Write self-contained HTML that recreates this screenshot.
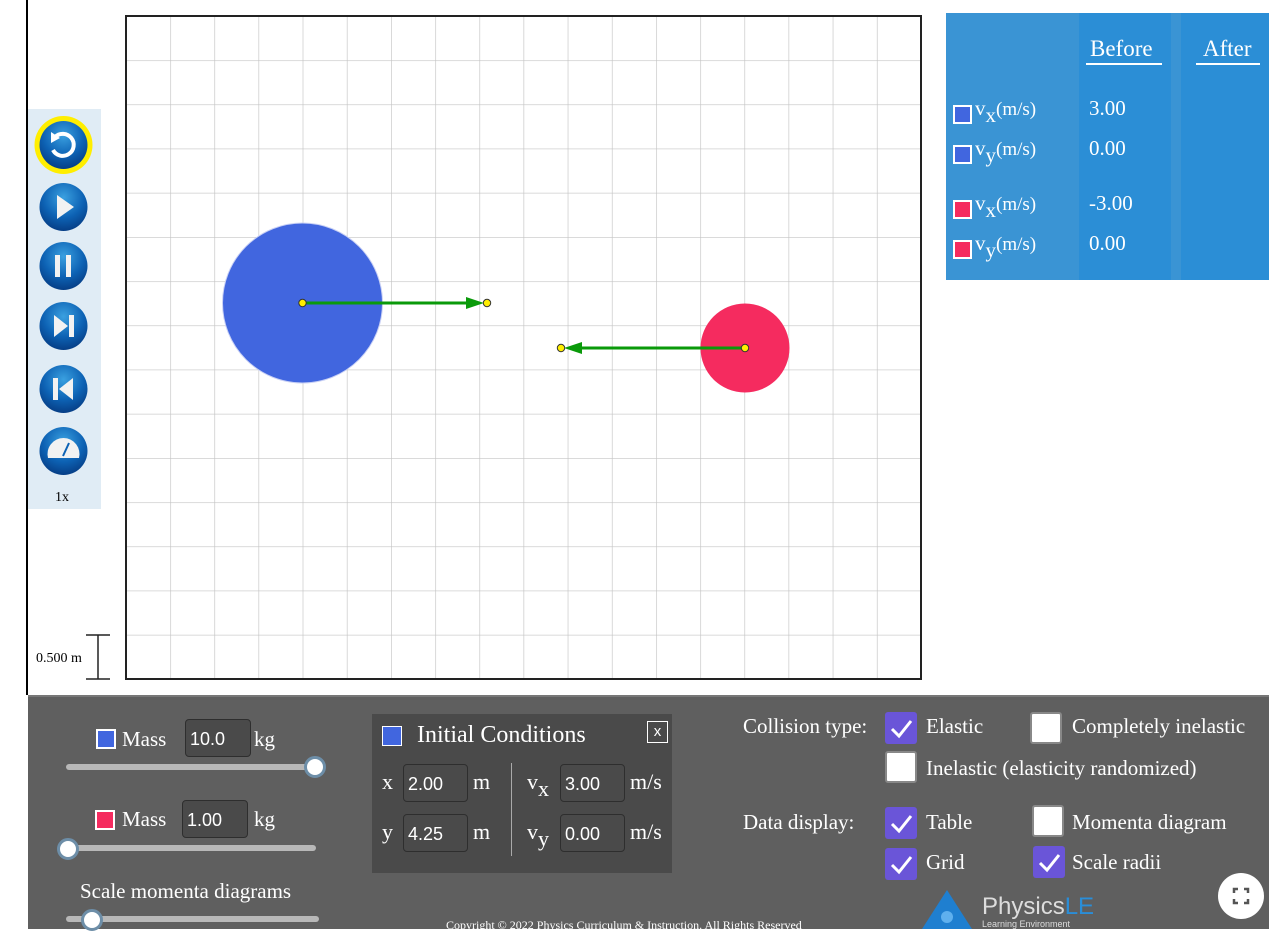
<!DOCTYPE html>
<html><head><meta charset="utf-8"><style>
*{margin:0;padding:0;box-sizing:border-box}
body{width:1269px;height:929px;overflow:hidden;background:#fff;font-family:"Liberation Serif",serif;position:relative}
.a{position:absolute}
.inp{position:absolute;background:#4a4a4a;border:1px solid #2e2e2e;border-radius:4px;color:#fff;font-family:"Liberation Sans",sans-serif;font-size:18px;padding:9px 0 0 4px;height:38px;line-height:20px}
.cb{position:absolute;width:32px;height:32px;border-radius:3px}
.on{background:#6a55d8}
.off{background:#fff;border:2px solid #888}
.sq{position:absolute;width:19px;height:19px;border:2px solid #fff}
.t{font-size:21px;color:#fff;position:absolute;white-space:nowrap}
.sb{font-size:21px;vertical-align:-7px;line-height:0}
.ms{font-size:19px}
</style></head><body>
<div class="a" style="left:26px;top:0;width:2px;height:695px;background:#000"></div>
<svg class="a" style="left:0;top:0" width="1269" height="700">
<defs>
<pattern id="g" x="126" y="16" width="44.17" height="44.2" patternUnits="userSpaceOnUse">
<path d="M0 0V44.2M0 0H44.17" stroke="#c4c4c4" stroke-width="1.3" fill="none"/>
</pattern>
<radialGradient id="bb" cx="50%" cy="30%" r="70%"><stop offset="0" stop-color="#3aa0e0"/><stop offset="0.6" stop-color="#0d62b4"/><stop offset="1" stop-color="#063e86"/></radialGradient>
</defs>
<rect x="126" y="16" width="795" height="663" fill="url(#g)" stroke="#222" stroke-width="2"/>
<circle cx="302.5" cy="303" r="80" fill="#4166df" stroke="#c8d0f5" stroke-width="1"/>
<circle cx="745" cy="348" r="44.5" fill="#f52b5f"/>
<line x1="302" y1="303" x2="470" y2="303" stroke="#0a9a0a" stroke-width="3"/>
<polygon points="466,297 484,303 466,309" fill="#0a9a0a"/>
<line x1="745" y1="348" x2="578" y2="348" stroke="#0a9a0a" stroke-width="3"/>
<polygon points="582,342 564,348 582,354" fill="#0a9a0a"/>
<g fill="#ffee00" stroke="#333" stroke-width="1"><circle cx="302.5" cy="303" r="3.7"/><circle cx="487" cy="303" r="3.7"/><circle cx="745" cy="348" r="3.7"/><circle cx="561" cy="348" r="3.7"/></g>
<path d="M86 635H110M98 635V679M86 679H110" stroke="#222" stroke-width="1.5" fill="none"/>
<text x="36" y="662" font-size="14" font-family="Liberation Serif">0.500 m</text>
<rect x="28" y="109" width="73" height="400" fill="#e0ecf5"/>
<circle cx="63.5" cy="145" r="29" fill="#ffee00"/>
<g fill="url(#bb)"><circle cx="63.5" cy="145" r="24"/><circle cx="63.5" cy="207" r="24"/><circle cx="63.5" cy="266" r="24"/><circle cx="63.5" cy="326" r="24"/><circle cx="63.5" cy="389" r="24"/><circle cx="63.5" cy="451" r="24"/></g>
<path d="M55 137A11 11 0 1 1 53 150" stroke="#fff" stroke-width="4" fill="none"/>
<polygon points="51,132 60,138 51,143" fill="#fff"/>
<polygon points="57,195 74,207 57,219" fill="#f2f2f2"/>
<rect x="55" y="255" width="5" height="22" fill="#f2f2f2"/><rect x="66" y="255" width="5" height="22" fill="#f2f2f2"/>
<polygon points="54,315 68,326 54,337" fill="#f2f2f2"/><rect x="69" y="315" width="5" height="22" fill="#f2f2f2"/>
<rect x="53" y="378" width="5" height="22" fill="#f2f2f2"/><polygon points="73,378 59,389 73,400" fill="#f2f2f2"/>
<path d="M48 458A16 16 0 1 1 79 458Z" fill="#f2f2f2"/>
<line x1="63" y1="456" x2="69" y2="443" stroke="#0d62b4" stroke-width="2"/>
<text x="55" y="501" font-size="14" font-family="Liberation Serif">1x</text>
</svg>
<!-- table -->
<div class="a" style="left:946px;top:13px;width:323px;height:267px;background:#3a94d4"></div>
<div class="a" style="left:1079px;top:13px;width:92px;height:267px;background:#2b8ed6"></div>
<div class="a" style="left:1181px;top:13px;width:88px;height:267px;background:#2b8ed6"></div>
<div class="t" style="left:1090px;top:36px;font-size:23px">Before</div>
<div class="a" style="left:1086px;top:63px;width:76px;height:2px;background:#fff"></div>
<div class="t" style="left:1203px;top:36px;font-size:23px">After</div>
<div class="a" style="left:1196px;top:63px;width:64px;height:2px;background:#fff"></div>
<div class="sq" style="left:953px;top:105px;background:#4166df"></div>
<div class="sq" style="left:953px;top:145px;background:#4166df"></div>
<div class="sq" style="left:953px;top:200px;background:#f52b5f"></div>
<div class="sq" style="left:953px;top:240px;background:#f52b5f"></div>
<div class="t" style="left:975px;top:96px">v<span class="sb">x</span><span class="ms">(m/s)</span></div>
<div class="t" style="left:975px;top:136px">v<span class="sb">y</span><span class="ms">(m/s)</span></div>
<div class="t" style="left:975px;top:191px">v<span class="sb">x</span><span class="ms">(m/s)</span></div>
<div class="t" style="left:975px;top:231px">v<span class="sb">y</span><span class="ms">(m/s)</span></div>
<div class="t" style="left:1089px;top:96px">3.00</div>
<div class="t" style="left:1089px;top:136px">0.00</div>
<div class="t" style="left:1089px;top:191px">-3.00</div>
<div class="t" style="left:1089px;top:231px">0.00</div>
<!-- bottom panel -->
<div class="a" style="left:28px;top:695px;width:1241px;height:234px;background:#5f5f5f;border-top:2px solid #777"></div>
<div class="sq" style="left:96px;top:729px;background:#4166df;width:20px;height:20px"></div>
<div class="t" style="left:122px;top:727px">Mass</div>
<div class="inp" style="left:185px;top:719px;width:66px">10.0</div>
<div class="t" style="left:254px;top:727px">kg</div>
<div class="a" style="left:66px;top:764px;width:258px;height:6px;border-radius:3px;background:#b8b8b8"></div>
<div class="a" style="left:304px;top:756px;width:22px;height:22px;border-radius:50%;background:#fff;border:3px solid #6d8ea8"></div>
<div class="sq" style="left:95px;top:810px;background:#f52b5f;width:20px;height:20px"></div>
<div class="t" style="left:122px;top:807px">Mass</div>
<div class="inp" style="left:182px;top:800px;width:66px">1.00</div>
<div class="t" style="left:254px;top:807px">kg</div>
<div class="a" style="left:58px;top:845px;width:258px;height:6px;border-radius:3px;background:#b8b8b8"></div>
<div class="a" style="left:57px;top:838px;width:22px;height:22px;border-radius:50%;background:#fff;border:3px solid #6d8ea8"></div>
<div class="t" style="left:80px;top:879px">Scale momenta diagrams</div>
<div class="a" style="left:66px;top:916px;width:253px;height:6px;border-radius:3px;background:#b8b8b8"></div>
<div class="a" style="left:81px;top:909px;width:22px;height:22px;border-radius:50%;background:#fff;border:3px solid #6d8ea8"></div>
<!-- initial conditions -->
<div class="a" style="left:372px;top:714px;width:300px;height:159px;background:#4a4a4a"></div>
<div class="sq" style="left:382px;top:726px;background:#4166df;width:20px;height:20px;border-width:1px"></div>
<div class="t" style="left:417px;top:722px;font-size:24px">Initial Conditions</div>
<div class="a" style="left:647px;top:721px;width:21px;height:22px;border:1.5px solid #fff;color:#fff;font-family:'Liberation Sans',sans-serif;font-size:15px;text-align:center;line-height:19px">x</div>
<div class="t" style="left:382px;top:769px;font-size:22px">x</div>
<div class="inp" style="left:403px;top:764px;width:65px">2.00</div>
<div class="t" style="left:473px;top:769px;font-size:22px">m</div>
<div class="t" style="left:382px;top:819px;font-size:22px">y</div>
<div class="inp" style="left:403px;top:814px;width:65px">4.25</div>
<div class="t" style="left:473px;top:819px;font-size:22px">m</div>
<div class="a" style="left:511px;top:763px;width:1px;height:93px;background:#aaa"></div>
<div class="t" style="left:527px;top:769px;font-size:22px">v<span class="sb" style="font-size:22px">x</span></div>
<div class="inp" style="left:560px;top:764px;width:65px">3.00</div>
<div class="t" style="left:630px;top:769px;font-size:22px">m/s</div>
<div class="t" style="left:527px;top:819px;font-size:22px">v<span class="sb" style="font-size:22px">y</span></div>
<div class="inp" style="left:560px;top:814px;width:65px">0.00</div>
<div class="t" style="left:630px;top:819px;font-size:22px">m/s</div>
<div class="t" style="left:446px;top:918px;font-size:12px">Copyright © 2022 Physics Curriculum &amp; Instruction. All Rights Reserved</div>
<!-- right options -->
<div class="t" style="left:743px;top:714px">Collision type:</div>
<div class="cb on" style="left:885px;top:712px"></div>
<div class="t" style="left:926px;top:714px">Elastic</div>
<div class="cb off" style="left:1030px;top:712px"></div>
<div class="t" style="left:1072px;top:714px">Completely inelastic</div>
<div class="cb off" style="left:885px;top:751px"></div>
<div class="t" style="left:926px;top:756px">Inelastic (elasticity randomized)</div>
<div class="t" style="left:743px;top:810px">Data display:</div>
<div class="cb on" style="left:885px;top:807px"></div>
<div class="t" style="left:926px;top:810px">Table</div>
<div class="cb off" style="left:1032px;top:805px"></div>
<div class="t" style="left:1072px;top:810px">Momenta diagram</div>
<div class="cb on" style="left:885px;top:848px"></div>
<div class="t" style="left:926px;top:850px">Grid</div>
<div class="cb on" style="left:1033px;top:846px"></div>
<div class="t" style="left:1072px;top:850px">Scale radii</div>
<svg class="a" style="left:880px;top:705px" width="200" height="200">
<g stroke="#fff" stroke-width="3" fill="none"><path d="M12 24L19 31L31 16"/><path d="M12 119L19 126L31 111"/><path d="M12 160L19 167L31 152"/><path d="M160 158L167 165L179 150"/></g>
</svg>
<svg class="a" style="left:920px;top:885px" width="180" height="44">
<polygon points="27,5 52,44 2,44" fill="#1f7fd0"/>
<circle cx="27" cy="32" r="6" fill="#5fb0ee"/>
<text x="62" y="29" font-family="Liberation Sans" font-size="24" fill="#ddd">Physics<tspan fill="#2a8ed8">LE</tspan></text>
<text x="62" y="42" font-family="Liberation Sans" font-size="9" fill="#ddd">Learning Environment</text>
</svg>
<div class="a" style="left:1218px;top:873px;width:46px;height:46px;border-radius:50%;background:#fff"></div>
<svg class="a" style="left:1218px;top:873px" width="46" height="46"><path d="M16 20V16H20M26 16H30V20M30 26V30H26M20 30H16V26" stroke="#555" stroke-width="2.5" fill="none"/></svg>
</body></html>
